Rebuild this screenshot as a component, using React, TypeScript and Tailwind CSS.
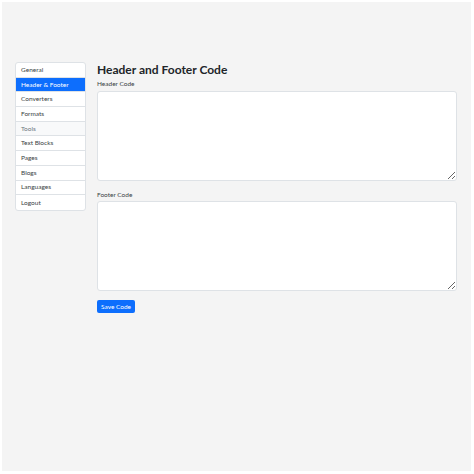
import React from 'react';

const items = [
  'General',
  'Header & Footer',
  'Converters',
  'Formats',
  'Tools',
  'Text Blocks',
  'Pages',
  'Blogs',
  'Languages',
  'Logout',
];

const App: React.FC = () => {
  return (
    <div className="w-[474px] h-[474px] bg-white p-[2px] pr-[3px] pb-[3px]" style={{ fontFamily: 'Lato, "Noto Sans", sans-serif' }}>
      <div className="w-full h-full bg-[#f4f4f4] pt-[60px] pl-[13px] pr-[14px] flex gap-[11px] items-start">
        <div className="w-[71px] flex flex-col bg-white border border-[#dee2e6] rounded-[3px] overflow-hidden">
          {items.map((item, i) => (
            <div
              key={item}
              className={`h-[14.7px] flex items-center px-[5px] text-[6.5px] ${
                i < items.length - 1 ? 'border-b border-[#dee2e6]' : ''
              } ${
                item === 'Header & Footer'
                  ? 'bg-[#0d6efd] text-white border-[#0d6efd]'
                  : item === 'Tools'
                  ? 'bg-[#f8f9fa] text-[#6c757d]'
                  : 'text-[#3a3f44]'
              }`}
            >
              {item}
            </div>
          ))}
        </div>
        <div className="flex-1 flex flex-col">
          <h1 className="text-[12px] font-bold text-[#212529] leading-[16px]">Header and Footer Code</h1>
          <label className="text-[6.5px] text-[#3a3f44] mt-[1px] mb-[3px] leading-[9px]">Header Code</label>
          <textarea className="h-[90px] w-full bg-white border border-[#dee2e6] rounded-[3px] resize-y outline-none" />
          <label className="text-[6.5px] text-[#3a3f44] mt-[9px] mb-[2px] leading-[9px]">Footer Code</label>
          <textarea className="h-[90px] w-full bg-white border border-[#dee2e6] rounded-[3px] resize-y outline-none" />
          <div className="mt-[9px] flex">
            <button className="h-[13px] px-[4px] bg-[#0d6efd] text-white text-[6.5px] leading-[13px] rounded-[2px]">Save Code</button>
          </div>
        </div>
      </div>
    </div>
  );
};

export default App;
